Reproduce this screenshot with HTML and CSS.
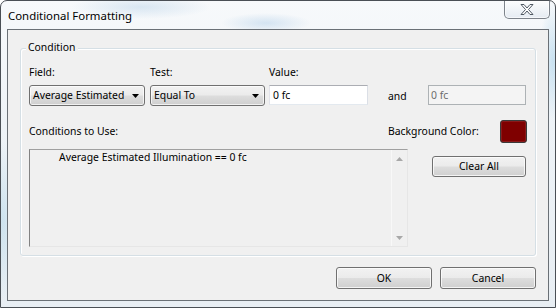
FILE: index.html
```html
<!DOCTYPE html>
<html>
<head>
<meta charset="utf-8">
<title>Conditional Formatting</title>
<link rel="stylesheet" href="styles.css">
</head>
<body>
<div class="window">
  <div class="titlebar">
    <div class="title">Conditional Formatting</div>
    <div class="close">
      <svg width="14" height="11" viewBox="0 0 14 11"><path d="M1 0.5 H4 L7 4 L10 0.5 H13 L8.5 5.5 L13 10.5 H10 L7 7 L4 10.5 H1 L5.5 5.5 Z" fill="#ffffff" stroke="#4f5863" stroke-width="1" stroke-linejoin="round"/></svg>
    </div>
  </div>
  <div class="client">
    <div class="group">
      <span class="group-title">Condition</span>
      <div class="row1">
        <div class="lbl">Field:</div>
        <div class="lbl">Test:</div>
        <div class="lbl">Value:</div>
        <div></div>
        <div></div>
        <div class="combo w116"><span>Average Estimated</span><svg width="7" height="4" viewBox="0 0 7 4"><path d="M0 0 H7 L3.5 4 Z" fill="#000"/></svg></div>
        <div class="combo w115"><span>Equal To</span><svg width="7" height="4" viewBox="0 0 7 4"><path d="M0 0 H7 L3.5 4 Z" fill="#000"/></svg></div>
        <div class="textbox w99">0 fc</div>
        <div class="and">and</div>
        <div class="textbox disabled w98">0 fc</div>
      </div>
      <div class="row2">
        <div class="lbl">Conditions to Use:</div>
        <div class="lbl">Background Color:</div>
        <div class="swatch"></div>
      </div>
      <div class="row3">
        <div class="list">
          <div class="list-items">
            <div class="item">Average Estimated Illumination == 0 fc</div>
          </div>
          <div class="scroll">
            <div class="sbtn"><svg width="7" height="4" viewBox="0 0 7 4"><path d="M0 4 H7 L3.5 0 Z" fill="#a8a8a8"/></svg></div>
            <div class="sbtn"><svg width="7" height="4" viewBox="0 0 7 4"><path d="M0 0 H7 L3.5 4 Z" fill="#a8a8a8"/></svg></div>
          </div>
        </div>
        <div class="btn clear">Clear All</div>
      </div>
    </div>
    <div class="footer">
      <div class="btn dlg">OK</div>
      <div class="btn dlg">Cancel</div>
    </div>
  </div>
</div>
</body>
</html>
```

FILE: styles.css
```css
* { box-sizing: border-box; }
html, body { margin: 0; padding: 0; }
body {
  width: 556px;
  height: 308px;
  overflow: hidden;
  background: #ffffff;
  font-family: "Noto Sans", "Open Sans", sans-serif;
  font-size: 10.4px;
  color: #000;
}
.window {
  width: 556px;
  height: 308px;
  border: 1px solid #4a4f55;
  border-radius: 7px 7px 0 0;
  display: flex;
  flex-direction: column;
  background:
    radial-gradient(ellipse 70px 12px at 140px 6px, rgba(160,195,225,0.35), rgba(160,195,225,0) 100%),
    radial-gradient(ellipse 45px 10px at 265px 22px, rgba(150,190,225,0.35), rgba(150,190,225,0) 100%),
    radial-gradient(ellipse 14px 60px at 552px 60px, rgba(150,200,230,0.45), rgba(150,200,230,0) 100%),
    radial-gradient(ellipse 14px 80px at 2px 220px, rgba(150,200,225,0.35), rgba(150,200,225,0) 100%),
    linear-gradient(180deg, #f7f9fb 0%, #eef3f7 40%, #e8eef3 100%);
}
.titlebar {
  height: 28px;
  display: flex;
  justify-content: space-between;
  align-items: flex-start;
}
.title {
  padding: 7px 0 0 7px;
  font-size: 11.4px;
  line-height: 15px;
  color: #000;
}
.close {
  width: 46px;
  height: 18px;
  margin-right: 5px;
  border: 1px solid #7d838b;
  border-top: none;
  border-radius: 0 0 5px 5px;
  background: linear-gradient(180deg, rgba(255,255,255,0.7), rgba(225,232,240,0.8));
  box-shadow: inset 0 0 0 1px rgba(255,255,255,0.6);
  display: flex;
  align-items: center;
  justify-content: center;
}
.client {
  height: 272px;
  margin: 0 6px;
  border: 1px solid #6a7076;
  background: #f0f0f0;
  display: flex;
  flex-direction: column;
}
.group {
  margin: 18px 12px 0 12px;
  border: 1px solid #d5dfe5;
  border-radius: 3px;
  box-shadow: 1px 1px 0 #ffffff, inset 1px 1px 0 #ffffff;
  padding: 0 8px 8px 8px;
  display: flex;
  flex-direction: column;
}
.group-title {
  align-self: flex-start;
  margin: -9px 0 0 -3px;
  padding: 0 2px;
  line-height: 15px;
  background: #f0f0f0;
}
.lbl { line-height: 15px; white-space: nowrap; }
.row1 {
  margin-top: 10px;
  display: grid;
  grid-template-columns: 121px 119px 119px 40px 98px;
  grid-template-rows: 15px 21px;
  row-gap: 5px;
}
.combo {
  height: 21px;
  border: 1px solid #707070;
  border-radius: 3px;
  background: linear-gradient(180deg, #f2f2f2 0%, #ebebeb 48%, #dddddd 52%, #cfcfcf 100%);
  box-shadow: inset 0 0 0 1px rgba(255,255,255,0.7);
  display: flex;
  align-items: center;
  justify-content: space-between;
  padding: 0 5px 0 3px;
  line-height: 15px;
  white-space: nowrap;
}
.w116 { width: 116px; }
.w115 { width: 115px; }
.w99 { width: 99px; }
.w98 { width: 98px; }
.textbox {
  height: 20px;
  border: 1px solid;
  border-color: #abadb3 #dbdfe6 #e3e9ef #e2e3ea;
  background: #ffffff;
  padding: 1px 0 0 3px;
  line-height: 16px;
}
.textbox.disabled {
  border-color: #adb2b5;
  background: #f4f4f4;
  color: #6d6d6d;
  padding-left: 2px;
}
.and { align-self: center; line-height: 15px; padding-top: 1px; }
.row2 {
  margin-top: 14px;
  display: grid;
  grid-template-columns: 359px 112px 27px;
  height: 23px;
  align-items: center;
}
.swatch {
  width: 27px;
  height: 23px;
  border: 1px solid #3a3a3a;
  border-radius: 3px;
  background: #7f0000;
  box-shadow: inset 0 0 0 1px #8a1a1a;
}
.row3 {
  margin-top: 6px;
  display: flex;
  align-items: flex-start;
}
.list {
  width: 379px;
  height: 98px;
  border: 1px solid;
  border-color: #a0a0a0 #e6e6e6 #e6e6e6 #828282;
  background: #f0f0f0;
  display: flex;
}
.list-items { flex: 1; padding-left: 29px; }
.item { line-height: 15px; white-space: nowrap; }
.scroll {
  width: 16px;
  border-left: 1px solid #f8f8f8;
  background: #f0f0f0;
  display: flex;
  flex-direction: column;
  justify-content: space-between;
}
.sbtn {
  height: 17px;
  display: flex;
  align-items: center;
  justify-content: center;
}
.btn {
  border: 1px solid #707070;
  border-radius: 3px;
  background: linear-gradient(180deg, #f2f2f2 0%, #ebebeb 48%, #dddddd 52%, #cfcfcf 100%);
  box-shadow: inset 0 0 0 1px rgba(252,252,252,0.8);
  display: flex;
  align-items: center;
  justify-content: center;
  line-height: 15px;
}
.clear {
  width: 94px;
  height: 21px;
  margin: 7px 0 0 24px;
}
.footer {
  margin-top: 11px;
  padding-right: 12px;
  display: flex;
  justify-content: flex-end;
  gap: 8px;
}
.dlg { width: 96px; height: 22px; }
```
